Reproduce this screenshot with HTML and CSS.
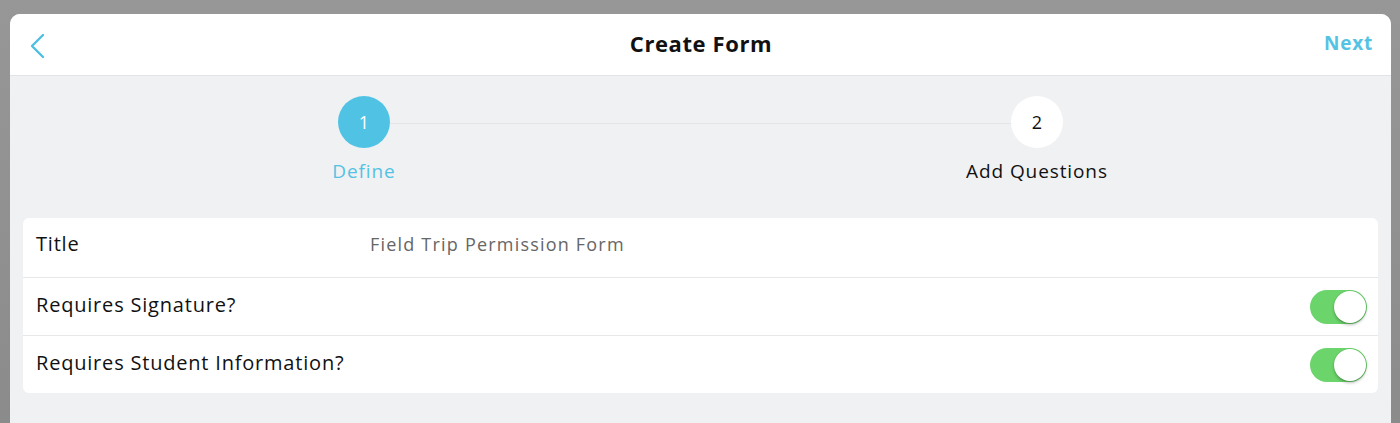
FILE: index.html
```html
<!DOCTYPE html>
<html>
<head>
<meta charset="utf-8">
<link rel="stylesheet" href="styles.css">
</head>
<body>
<div class="backdrop">
  <div class="modal">
    <header class="topbar">
      <button class="back" aria-label="Back">
        <svg width="16" height="26" viewBox="0 0 16 26"><path d="M14 2 L3 13 L14 24" fill="none" stroke="#4fbfe2" stroke-width="2.4" stroke-linecap="round" stroke-linejoin="round"/></svg>
      </button>
      <h1 class="title">Create Form</h1>
      <button class="next">Next</button>
    </header>
    <main class="content">
      <div class="stepper">
        <div class="track"></div>
        <div class="step active">
          <div class="circle">1</div>
          <div class="label">Define</div>
        </div>
        <div class="step">
          <div class="circle">2</div>
          <div class="label">Add Questions</div>
        </div>
      </div>
      <div class="card">
        <div class="row">
          <span class="row-label">Title</span>
          <span class="row-value">Field Trip Permission Form</span>
        </div>
        <div class="row">
          <span class="row-label">Requires Signature?</span>
          <span class="toggle"><span class="knob"></span></span>
        </div>
        <div class="row">
          <span class="row-label">Requires Student Information?</span>
          <span class="toggle"><span class="knob"></span></span>
        </div>
      </div>
    </main>
  </div>
</div>
</body>
</html>
```
FILE: styles.css
```css
* { box-sizing: border-box; }
html, body { margin: 0; height: 100%; }
body {
  font-family: "Open Sans", Lato, sans-serif;
  background: #8c8c8c;
  overflow: hidden;
}
.backdrop {
  height: 423px;
  padding: 14px 9px 0 10px;
  background: linear-gradient(#979797, #8b8b8b);
}
.modal {
  height: 100%;
  background: #f0f1f3;
  border-radius: 10px 10px 0 0;
  overflow: hidden;
  display: flex;
  flex-direction: column;
}
.topbar {
  height: 62px;
  flex: none;
  background: #fff;
  border-bottom: 1px solid #e2e3e6;
  display: grid;
  grid-template-columns: 1fr auto 1fr;
  align-items: center;
  padding: 0 18px 0 19px;
}
.back {
  justify-self: start;
  background: none; border: 0; padding: 0;
  display: flex;
  margin-top: 3px;
}
.title {
  margin: 0 0 4px;
  font-size: 22px;
  font-weight: 700;
  color: #111;
  letter-spacing: 0.6px;
}
.next {
  justify-self: end;
  background: none; border: 0; padding: 0;
  margin-bottom: 3px;
  font-family: inherit;
  font-size: 19px;
  font-weight: 700;
  color: #56c2e3;
  letter-spacing: 0.8px;
}
.content {
  flex: 1;
  padding: 20px 13px 0 13px;
}
.stepper {
  position: relative;
  display: flex;
  justify-content: space-between;
  padding: 0 241px;
  height: 122px;
}
.track {
  position: absolute;
  left: 367px; right: 367px;
  top: 27px;
  height: 1px;
  background: #e3e4e7;
}
.step {
  position: relative;
  width: 200px;
  display: flex;
  flex-direction: column;
  align-items: center;
}
.circle {
  width: 52px; height: 52px;
  border-radius: 50%;
  background: #fff;
  color: #111;
  display: flex; align-items: center; justify-content: center;
  font-size: 18px;
}
.step.active .circle { background: #50c3e5; color: #fff; }
.label {
  margin-top: 10px;
  font-size: 19px;
  color: #111;
  letter-spacing: 0.9px;
}
.step.active .label { color: #56c2e3; }
.card {
  background: #fff;
  border-radius: 6px;
  overflow: hidden;
}
.row {
  height: 58px;
  display: flex;
  align-items: center;
  padding: 0 11px 5px 13px;
  border-top: 1px solid #e7e8ea;
  font-size: 20px;
  color: #111;
}
.row:first-child { border-top: 0; height: 59px; padding-bottom: 8px; }
.row-label { letter-spacing: 0.8px; flex: none; width: 334px; }
.row-value { color: #666; font-size: 18px; letter-spacing: 1.2px; }
.toggle {
  margin-left: auto;
  margin-bottom: -5px;
  width: 57px; height: 34px;
  border-radius: 17px;
  background: #6bd46b;
  position: relative;
}
.knob {
  position: absolute;
  right: 1px; top: 1px;
  width: 32px; height: 32px;
  border-radius: 50%;
  background: #fff;
  box-shadow: 0 2px 3px rgba(0,0,0,0.25), 0 0 0 0.5px rgba(0,0,0,0.08);
}
```
